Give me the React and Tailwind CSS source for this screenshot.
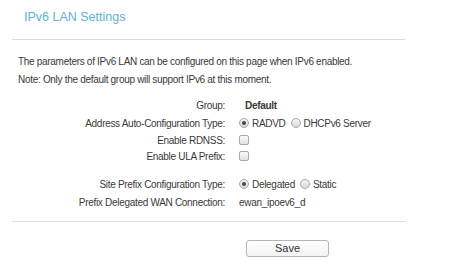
import React from 'react';

const Radio = ({ checked }) => (
    <span className="inline-flex items-center justify-center w-[10px] h-[10px] rounded-full border border-[#a8a8a8] bg-gradient-to-b from-[#f4f4f4] to-[#d9d9d9]">
        {checked && <span className="w-[4px] h-[4px] rounded-full bg-[#444]" />}
    </span>
);

const Checkbox = () => (
    <span className="inline-block w-[10px] h-[10px] rounded-[2px] border border-[#a8a8a8] bg-gradient-to-b from-[#fbfbfb] to-[#e2e2e2]" />
);

const Row = ({ label, h = 'h-[18px]', children }) => (
    <div className={`flex items-center ${h}`}>
        <div className="w-[226px] text-right pr-[1px]">{label}</div>
        <div className="pl-[13px] flex items-center gap-[3px]">{children}</div>
    </div>
);

export default function App() {
    return (
        <div className="w-[474px] h-[265px] bg-white text-[#3a3a3a] text-[10px] tracking-[-0.3px] overflow-hidden" style={{ fontFamily: '"Liberation Sans", Arial, sans-serif' }}>
            <div className="h-[39px] pl-[24px] pt-[8px]">
                <h1 className="text-[12.5px] leading-[18px] tracking-normal text-[#5cb4cb]">IPv6 LAN Settings</h1>
            </div>
            <div className="ml-[12px] w-[393px] h-px bg-[#dcdcdc]" />

            <div className="pl-[18px] pt-[13px] leading-[18px]">
                <p>The parameters of IPv6 LAN can be configured on this page when IPv6 enabled.</p>
                <p>Note: Only the default group will support IPv6 at this moment.</p>
            </div>

            <div className="mt-[7px]">
                <Row label="Group:">
                    <span className="font-bold pl-[6px]">Default</span>
                </Row>
                <Row label="Address Auto-Configuration Type:">
                    <Radio checked />
                    <span className="mr-[2px]">RADVD</span>
                    <Radio />
                    <span>DHCPv6 Server</span>
                </Row>
                <Row label="Enable RDNSS:" h="h-[16px]">
                    <Checkbox />
                </Row>
                <Row label="Enable ULA Prefix:" h="h-[16px]">
                    <Checkbox />
                </Row>
                <div className="h-[11px]" />
                <Row label="Site Prefix Configuration Type:">
                    <Radio checked />
                    <span className="mr-[2px]">Delegated</span>
                    <Radio />
                    <span>Static</span>
                </Row>
                <Row label="Prefix Delegated WAN Connection:" h="h-[19px]">
                    <span>ewan_ipoev6_d</span>
                </Row>
            </div>

            <div className="mt-[9px] ml-[12px] w-[393px] h-px bg-[#dcdcdc]" />

            <div className="mt-[18px] pl-[246px]">
                <button className="w-[83px] h-[17px] rounded-[3px] border border-[#b5b5b5] bg-gradient-to-b from-white to-[#f3f3f3] text-[11px] leading-none tracking-normal text-[#333]">
                    Save
                </button>
            </div>
        </div>
    );
}
